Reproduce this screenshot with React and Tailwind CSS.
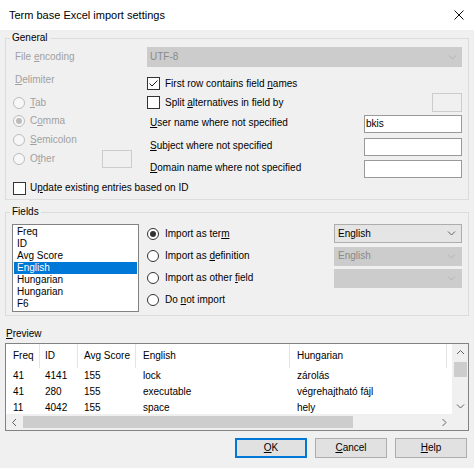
import React from "react";

const U = ({ children }) => <u className="underline underline-offset-[1px]">{children}</u>;

const Chevron = ({ dir = "down", color = "#606060" }) => {
  const d = {
    down: "M1 2.5 L4.5 6 L8 2.5",
    up: "M1 6 L4.5 2.5 L8 6",
    left: "M6 1 L2.5 4.5 L6 8",
    right: "M2.5 1 L6 4.5 L2.5 8",
  }[dir];
  return (
    <svg width="9" height="9" viewBox="0 0 9 9" className="shrink-0">
      <path d={d} fill="none" stroke={color} strokeWidth="1" />
    </svg>
  );
};

const Radio = ({ checked, disabled }) => (
  <span
    className={
      "w-[12px] h-[12px] rounded-full border flex items-center justify-center shrink-0 " +
      (disabled ? "border-[#bcbcbc] bg-[#f7f7f7]" : "border-[#333333] bg-white")
    }
  >
    {checked && (
      <span className={"w-[6px] h-[6px] rounded-full " + (disabled ? "bg-[#bcbcbc]" : "bg-[#333333]")} />
    )}
  </span>
);

const Check = ({ checked }) => (
  <span className="w-[13px] h-[13px] border border-[#333333] bg-white flex items-center justify-center shrink-0">
    {checked && (
      <svg width="11" height="11" viewBox="0 0 11 11">
        <polyline points="1.5,5.5 4,8 9.5,2.5" fill="none" stroke="#222222" strokeWidth="1" />
      </svg>
    )}
  </span>
);

const Combo = ({ value, disabled, className = "" }) => (
  <div
    className={
      "h-[19px] border flex items-center justify-between pl-[3px] pr-[5px] " +
      (disabled ? "bg-[#cccccc] border-[#cccccc] text-[#8a8a8a] " : "bg-[#e5e5e5] border-[#adadad] text-black ") +
      className
    }
  >
    <span>{value}</span>
    <Chevron color={disabled ? "#b4b4b4" : "#606060"} />
  </div>
);

const TextBox = ({ value = "" }) => (
  <div className="w-[98px] h-[18px] bg-white border border-[#999999] flex items-center pl-[1px] text-black">
    {value}
  </div>
);

const fields = ["Freq", "ID", "Avg Score", "English", "Hungarian", "Hungarian", "F6"];

const cols = [
  { name: "Freq", w: "w-[34px] pl-[7px]" },
  { name: "ID", w: "w-[38px] pl-[5px]" },
  { name: "Avg Score", w: "w-[58px] pl-[6px]" },
  { name: "English", w: "w-[154px] pl-[7px]" },
  { name: "Hungarian", w: "w-[157px] pl-[7px]" },
];

const rows = [
  ["41", "4141", "155", "lock", "zárolás"],
  ["41", "280", "155", "executable", "végrehajtható fájl"],
  ["11", "4042", "155", "space", "hely"],
];

export default function App() {
  return (
    <div className="w-[474px] h-[468px] bg-[#f0f0f0] flex flex-col overflow-hidden font-['Liberation_Sans',Arial,sans-serif] text-[10px] leading-[14px] text-black">
      {/* title bar */}
      <div className="h-[30px] bg-white flex items-center justify-between pl-[9px] pr-[10px] shrink-0">
        <span className="text-[11px]">Term base Excel import settings</span>
        <svg width="10" height="10" viewBox="0 0 10 10">
          <path d="M0.5 0.5 L9.5 9.5 M9.5 0.5 L0.5 9.5" stroke="#111111" strokeWidth="1" />
        </svg>
      </div>

      {/* General */}
      <fieldset className="mt-[1px] ml-[5px] w-[464px] border border-[#dcdcdc] pl-[7px] pr-[6px] pb-[4px]">
        <legend className="ml-[-3px] px-[2px] leading-[14px]">General</legend>
        <div className="mt-[2px] h-[20px] flex items-center">
          <span className="w-[134px] pl-[2px] text-[#a0a0a0]">
            File <U>e</U>ncoding
          </span>
          <div className="flex-1 h-[20px] bg-[#cccccc] flex items-center justify-between pl-[3px] pr-[5px] text-[#8a8a8a]">
            <span>UTF-8</span>
            <Chevron color="#b4b4b4" />
          </div>
        </div>

        <div className="flex">
          <div className="w-[134px] flex flex-col text-[#a0a0a0]">
            <div className="mt-[6px] h-[14px] pl-[2px] flex items-center">
              <span>
                <U>D</U>elimiter
              </span>
            </div>
            <div className="mt-[6px] h-[19px] flex items-center gap-[5px]">
              <Radio disabled />
              <span>
                <U>T</U>ab
              </span>
            </div>
            <div className="h-[18px] flex items-center gap-[5px]">
              <Radio disabled checked />
              <span>
                C<U>o</U>mma
              </span>
            </div>
            <div className="h-[19px] flex items-center gap-[5px]">
              <Radio disabled />
              <span>
                <U>S</U>emicolon
              </span>
            </div>
            <div className="h-[19px] flex items-center gap-[5px]">
              <Radio disabled />
              <span>
                O<U>t</U>her
              </span>
              <div className="ml-auto mr-[15px] w-[30px] h-[18px] border border-[#cccccc] bg-[#f0f0f0]" />
            </div>
          </div>

          <div className="flex-1 flex flex-col">
            <div className="mt-[7px] h-[19px] flex items-center gap-[5px]">
              <Check checked />
              <span>
                First row contains field <U>n</U>ames
              </span>
            </div>
            <div className="h-[19px] flex items-center gap-[5px]">
              <Check />
              <span>
                Split <U>a</U>lternatives in field by
              </span>
              <div className="ml-auto w-[30px] h-[19px] border border-[#cccccc] bg-[#f0f0f0]" />
            </div>
            <div className="mt-[3px] flex items-center justify-between">
              <span className="pl-[3px] pb-[3px]">
                <U>U</U>ser name where not specified
              </span>
              <TextBox value="bkis" />
            </div>
            <div className="mt-[5px] flex items-center justify-between">
              <span className="pl-[3px] pb-[3px]">
                <U>S</U>ubject where not specified
              </span>
              <TextBox />
            </div>
            <div className="mt-[4px] flex items-center justify-between">
              <span className="pl-[3px] pb-[3px]">
                <U>D</U>omain name where not specified
              </span>
              <TextBox />
            </div>
          </div>
        </div>

        <div className="mt-[3px] h-[14px] flex items-center gap-[4px]">
          <Check />
          <span>
            U<U>p</U>date existing entries based on ID
          </span>
        </div>
      </fieldset>

      {/* Fields */}
      <fieldset className="mt-[5px] ml-[5px] w-[464px] border border-[#dcdcdc] pl-[6px] pr-[6px] pb-[3px]">
        <legend className="ml-[-2px] px-[2px] leading-[14px]">Fields</legend>
        <div className="flex items-start">
          <div className="mt-[5px] w-[127px] h-[88px] bg-white border border-[#828282] pt-[1px] overflow-hidden">
            {fields.map((f, i) => (
              <div
                key={i}
                className={
                  "h-[12px] leading-[12px] pl-[3px] mx-[1px] " + (i === 3 ? "bg-[#0078d7] text-white" : "")
                }
              >
                {f}
              </div>
            ))}
          </div>
          <div className="mt-[3px] ml-[8px] flex-1 flex flex-col">
            <div className="h-[23px] flex items-center justify-between">
              <div className="flex items-center gap-[6px]">
                <Radio checked />
                <span>
                  Import as ter<U>m</U>
                </span>
              </div>
              <Combo value="English" className="w-[128px]" />
            </div>
            <div className="h-[22px] flex items-center justify-between">
              <div className="flex items-center gap-[6px]">
                <Radio />
                <span>
                  Import as <U>d</U>efinition
                </span>
              </div>
              <Combo value="English" disabled className="w-[128px]" />
            </div>
            <div className="h-[22px] flex items-center justify-between">
              <div className="flex items-center gap-[6px]">
                <Radio />
                <span>
                  Import as other <U>f</U>ield
                </span>
              </div>
              <Combo value="" disabled className="w-[128px]" />
            </div>
            <div className="h-[22px] flex items-center">
              <div className="flex items-center gap-[6px]">
                <Radio />
                <span>
                  Do <U>n</U>ot import
                </span>
              </div>
            </div>
          </div>
        </div>
      </fieldset>

      {/* Preview */}
      <div className="mt-[11px] ml-[6px] h-[14px]">
        <U>P</U>review
      </div>
      <div className="mt-[2px] ml-[5px] w-[464px] h-[88px] border border-[#828282] bg-white flex flex-col">
        <div className="h-[70px] flex">
          <div className="flex-1 overflow-hidden">
            <div className="h-[24px] flex">
              {cols.map((c) => (
                <div key={c.name} className={c.w + " shrink-0 border-r border-[#e5e5e5] flex items-center"}>
                  {c.name}
                </div>
              ))}
            </div>
            {rows.map((r, i) => (
              <div key={i} className="h-[16px] flex items-center">
                {r.map((v, j) => (
                  <div key={j} className={cols[j].w + " shrink-0 whitespace-nowrap"}>
                    {v}
                  </div>
                ))}
              </div>
            ))}
          </div>
          <div className="w-[16px] bg-[#f0f0f0] flex flex-col items-center">
            <div className="h-[16px] flex items-center justify-center">
              <Chevron dir="up" />
            </div>
            <div className="mt-[2px] w-[13px] h-[15px] bg-[#cdcdcd]" />
            <div className="flex-1" />
            <div className="h-[16px] flex items-center justify-center">
              <Chevron dir="down" />
            </div>
          </div>
        </div>
        <div className="h-[16px] flex">
          <div className="flex-1 bg-[#f0f0f0] flex items-center">
            <div className="w-[16px] h-[16px] flex items-center justify-center">
              <Chevron dir="left" />
            </div>
            <div className="ml-[1px] w-[330px] h-[12px] bg-[#cdcdcd]" />
            <div className="flex-1" />
            <div className="w-[16px] h-[16px] flex items-center justify-center">
              <Chevron dir="right" />
            </div>
          </div>
          <div className="w-[16px] bg-[#f0f0f0]" />
        </div>
      </div>

      {/* buttons */}
      <div className="mt-[7px] flex justify-end gap-[8px] pr-[7px]">
        <button className="w-[72px] h-[20px] bg-[#e1e1e1] border border-[#0078d7] shadow-[inset_0_0_0_1px_#0078d7]">
          <U>O</U>K
        </button>
        <button className="w-[72px] h-[20px] bg-[#e1e1e1] border border-[#adadad]">
          <U>C</U>ancel
        </button>
        <button className="w-[72px] h-[20px] bg-[#e1e1e1] border border-[#adadad]">
          <U>H</U>elp
        </button>
      </div>
    </div>
  );
}
